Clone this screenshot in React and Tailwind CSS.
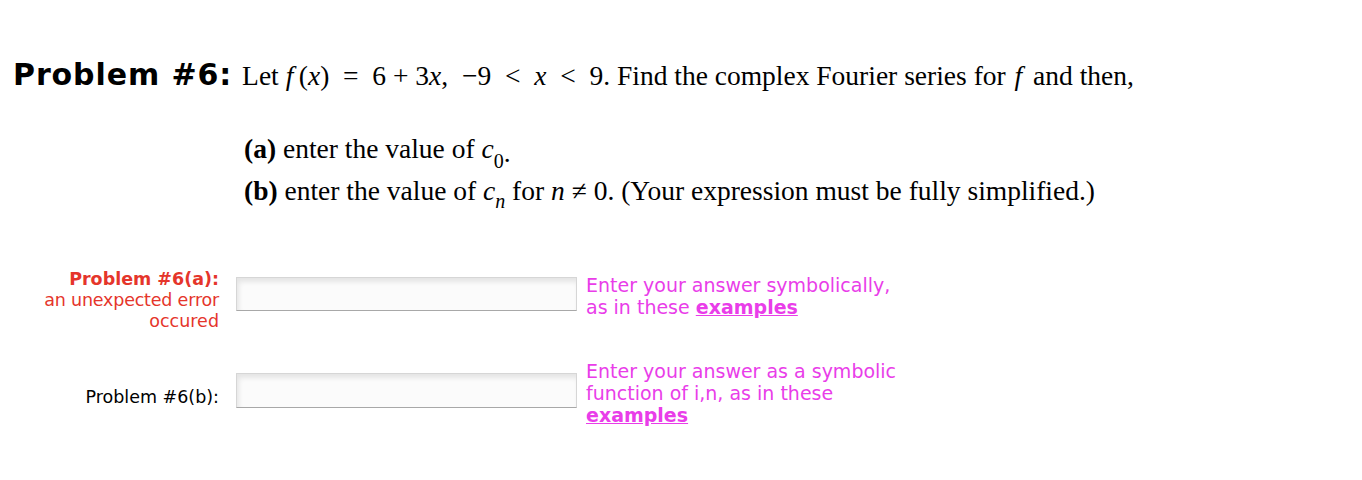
export default function App() {
  const serif = { fontFamily: '"Liberation Serif", "Times New Roman", serif' };
  const sans = { fontFamily: '"DejaVu Sans", Verdana, sans-serif' };
  return (
    <div className="w-[1362px] h-[480px] bg-white text-black">
      <div className="pt-[55px] pl-[13px] flex items-baseline leading-[40px]">
        <span className="text-[30px] font-bold tracking-[0.9px]" style={sans}>Problem #6:</span>
        <span className="ml-[10px] text-[27.5px]" style={serif}>
          Let <i>f</i>&#8201;(<i>x</i>) &nbsp;=&nbsp; 6 + 3<i>x</i>, &nbsp;−9 &nbsp;&lt;&nbsp; <i>x</i> &nbsp;&lt;&nbsp; 9. Find the complex Fourier series for <i className="ml-[2px] mr-[4px]">f</i> and then,
        </span>
      </div>
      <div className="pl-[244px] pt-[32px] text-[27.5px] leading-[42px]" style={serif}>
        <div><b>(a)</b> enter the value of <i>c</i><sub className="text-[20px] leading-none align-[-5px]">0</sub><span className="leading-none align-[-4px]">.</span></div>
        <div><b>(b)</b> enter the value of <i>c</i><sub className="text-[20px] leading-none align-[-3px]"><i>n</i></sub> for <i>n</i> ≠ 0. (Your expression must be fully simplified.)</div>
      </div>
      <div className="pt-[42px]" style={sans}>
        <div className="flex items-center h-[80px]">
          <div className="w-[219px] text-right text-[#e5352b] text-[17.5px] leading-[21px] mt-[12px]">
            <div className="font-bold">Problem #6(a):</div>
            <div className="tracking-[-0.2px]">an unexpected error</div>
            <div>occured</div>
          </div>
          <input className="ml-[17px] w-[341px] h-[34px] border border-[#d6d6d6] border-b-[#a8a8a8] bg-[#fbfbfb] shadow-[inset_2px_4px_5px_rgba(0,0,0,0.09)] outline-none" />
          <div className="ml-[9px] text-[#e93de9] text-[19px] leading-[22px] mt-[4px]">
            <div>Enter your answer symbolically,</div>
            <div>as in these <a className="font-bold underline">examples</a></div>
          </div>
        </div>
        <div className="flex items-center h-[80px] mt-[16px]">
          <div className="w-[219px] text-right text-[17.5px] leading-[21px] mt-[14px]">Problem #6(b):</div>
          <input className="ml-[17px] w-[341px] h-[35px] border border-[#d6d6d6] border-b-[#a8a8a8] bg-[#fbfbfb] shadow-[inset_2px_4px_5px_rgba(0,0,0,0.09)] outline-none" />
          <div className="ml-[9px] text-[#e93de9] text-[19px] leading-[22px] mt-[6px]">
            <div>Enter your answer as a symbolic</div>
            <div>function of i,n, as in these</div>
            <div><a className="font-bold underline">examples</a></div>
          </div>
        </div>
      </div>
    </div>
  );
}
